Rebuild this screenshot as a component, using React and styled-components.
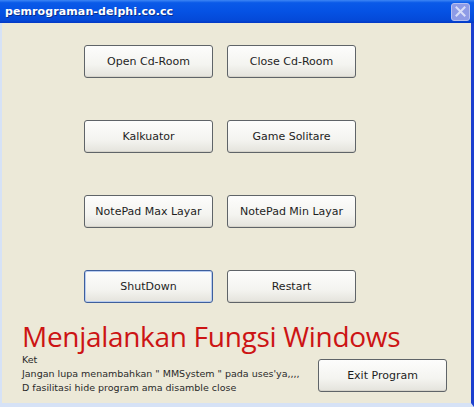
import styled, { createGlobalStyle } from "styled-components";

const GlobalStyle = createGlobalStyle`
  html, body {
    margin: 0;
    padding: 0;
    background: #ece9d8;
  }
`;

const buttons = [
  ["Open Cd-Room", "Close Cd-Room"],
  ["Kalkuator", "Game Solitare"],
  ["NotePad Max Layar", "NotePad Min Layar"],
  ["ShutDown", "Restart"],
];

const App = () => {
  return (
    <>
      <GlobalStyle />
      <Window>
        <TitleBar>
          <Title>pemrograman-delphi.co.cc</Title>
          <CloseButton>
            <svg width="11" height="11" viewBox="0 0 11 11">
              <path
                d="M1.5 1.5 L9.5 9.5 M9.5 1.5 L1.5 9.5"
                stroke="#d9def8"
                strokeWidth="2"
                strokeLinecap="square"
              />
            </svg>
          </CloseButton>
        </TitleBar>
        <Client>
          <ButtonGrid>
            {buttons.flat().map((label) => (
              <Button key={label} $focused={label === "ShutDown"}>
                {label}
              </Button>
            ))}
          </ButtonGrid>
          <Heading>Menjalankan Fungsi Windows</Heading>
          <Footer>
            <Notes>
              <div>Ket</div>
              <div>Jangan lupa menambahkan " MMSystem " pada uses'ya,,,,</div>
              <div>D fasilitasi hide program ama disamble close</div>
            </Notes>
            <ExitButton>Exit Program</ExitButton>
          </Footer>
        </Client>
      </Window>
    </>
  );
};
export default App;

const Window = styled.div`
  width: 474px;
  height: 407px;
  display: flex;
  flex-direction: column;
  background: #0a4fd8;
  overflow: hidden;
`;

const TitleBar = styled.div`
  height: 23px;
  flex: none;
  display: flex;
  align-items: center;
  justify-content: space-between;
  padding: 0 4px 0 5px;
  background: linear-gradient(
    to bottom,
    #3d86f5 0%,
    #0a5ae8 12%,
    #0552e4 50%,
    #0449d8 88%,
    #0338c4 100%
  );
`;

const Title = styled.div`
  color: #ffffff;
  font-family: "DejaVu Sans", "Liberation Sans", sans-serif;
  font-weight: bold;
  font-size: 11px;
  text-shadow: 1px 1px 0 #0a2f8a;
  letter-spacing: 0.1px;
`;

const CloseButton = styled.div`
  width: 17px;
  height: 16px;
  border: 1px solid #b6c0f0;
  border-radius: 3px;
  background: #8e9be6;
  display: flex;
  align-items: center;
  justify-content: center;
`;

const Client = styled.div`
  flex: 1;
  background: #ece9d8;
  border-left: 2px solid #d6e2f6;
  border-right: 3px solid #1b3fcf;
  border-bottom: 4px solid #d6e2f6;
  padding: 22px 0 0 0;
  display: flex;
  flex-direction: column;
`;

const ButtonGrid = styled.div`
  display: grid;
  grid-template-columns: 129px 130px;
  column-gap: 14px;
  row-gap: 42px;
  margin-left: 82px;
`;

const Button = styled.div`
  width: 129px;
  height: 33px;
  box-sizing: border-box;
  display: flex;
  align-items: center;
  justify-content: center;
  border: 1px solid ${(p) => (p.$focused ? "#3e5f9c" : "#5f6468")};
  border-radius: 3px;
  background: linear-gradient(to bottom, #fdfdfc 0%, #f4f4f0 60%, #e4e3dc 100%);
  box-shadow: ${(p) =>
    p.$focused ? "inset 0 0 0 1px #b9cdf0" : "inset 0 -1px 0 #d6d4cb"};
  color: #1e1e1e;
  font-family: "DejaVu Sans", "Liberation Sans", sans-serif;
  font-size: 11px;
`;

const ExitButton = styled(Button)`
  margin-top: 6px;
`;

const Heading = styled.div`
  margin: 16px 0 0 20px;
  color: #cc1414;
  font-family: "Open Sans", "Liberation Sans", sans-serif;
  font-size: 28px;
  line-height: 34px;
  letter-spacing: -0.3px;
`;

const Footer = styled.div`
  display: flex;
  align-items: flex-start;
  justify-content: space-between;
  padding: 0 24px 0 20px;
`;

const Notes = styled.div`
  color: #2a2a2a;
  font-family: "DejaVu Sans", "Liberation Sans", sans-serif;
  font-size: 9.5px;
  line-height: 14px;
  margin-top: 0;
`;
